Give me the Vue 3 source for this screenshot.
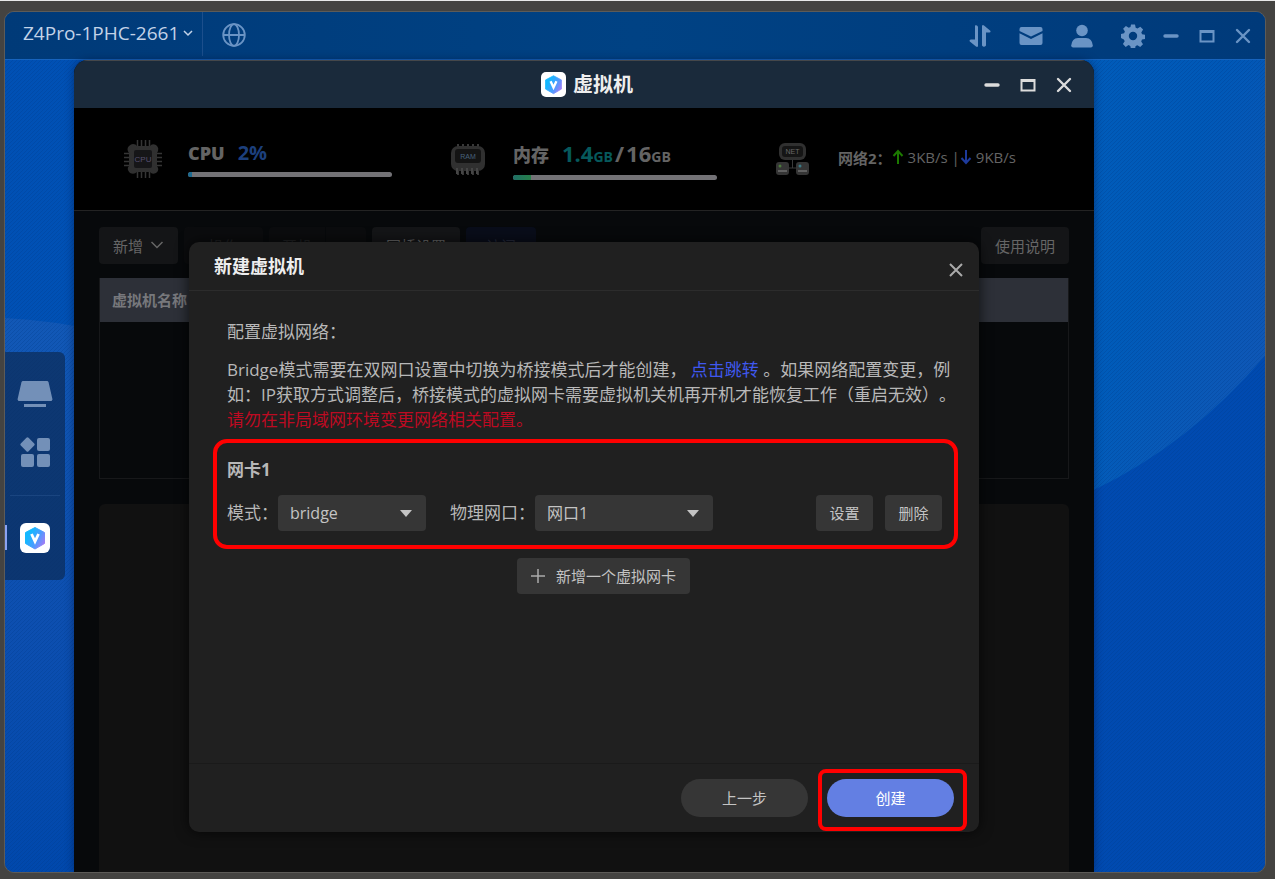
<template>
  <div class="page" lang="zh-CN">
    <div class="desktop">
      <svg class="wallpaper" viewBox="0 0 1260 860" preserveAspectRatio="none" aria-hidden="true">
        <defs>
          <linearGradient id="wall" x1="0" y1="0" x2="1" y2="0">
            <stop offset="0" stop-color="#0050b4" />
            <stop offset="0.85" stop-color="#005cba" />
            <stop offset="1" stop-color="#0057b6" />
          </linearGradient>
          <linearGradient id="wave" x1="0" y1="0" x2="0" y2="1">
            <stop offset="0" stop-color="#1258b6" />
            <stop offset="0.55" stop-color="#0d4fb0" />
            <stop offset="1" stop-color="#0048ac" />
          </linearGradient>
          <linearGradient id="glow" x1="0" y1="0" x2="1" y2="1">
            <stop offset="0.4" stop-color="#1459b6" stop-opacity="0" />
            <stop offset="1" stop-color="#1457b6" />
          </linearGradient>
          <pattern id="stripes" width="4" height="4" patternUnits="userSpaceOnUse">
            <path d="M-1 1l2-2M0 4l4-4M3 5l2-2" stroke="#003c8c" stroke-opacity="0.3" />
          </pattern>
        </defs>
        <rect width="1260" height="860" fill="url(#wall)" />
        <path d="M0 306Q45 308 100 320V860H0z" fill="url(#wave)" />
        <path d="M1089 40H1260V344Q1185 432 1089 478z" fill="url(#glow)" />
        <path d="M1089 478Q1185 432 1260 344V860H1089z" fill="#004ab0" />
        <rect width="1260" height="860" fill="url(#stripes)" />
      </svg>

      <header class="topbar">
        <button class="device">Z4Pro-1PHC-2661
          <svg width="10" height="10" viewBox="0 0 10 10"><path d="M1 3l4 4 4-4" /></svg>
        </button>
        <button class="globe" aria-label="网络">
          <svg width="24" height="24" viewBox="0 0 24 24" fill="none" stroke="#6a94c5" stroke-width="1.800">
            <circle cx="12" cy="12" r="10.800" />
            <ellipse cx="12" cy="12" rx="5" ry="10.800" />
            <path d="M1.200 12h21.600" />
          </svg>
        </button>
        <nav class="tray">
          <button aria-label="传输">
            <svg width="24" height="24" viewBox="0 0 24 24">
              <path d="M7 1.500a2 2 0 0 1 3 1.600V22q-.500 1.500-2 .500L1.800 17.500q-.800-1.700 1-2H7zM14 21.500V2q.500-1.500 2-.500l6.300 5.200q.800 1.600-1 1.900H18v12.800q-2 2.500-4 .100z" />
            </svg>
          </button>
          <button aria-label="消息">
            <svg width="24" height="24" viewBox="0 0 24 24">
              <path d="M2.500 3h19Q23.500 3 23.500 5v2L12 12.500.500 7V5q0-2 2-2zM.500 9.300L12 15l11.500-5.700V19q0 2-2 2h-19q-2 0-2-2z" />
            </svg>
          </button>
          <button aria-label="用户">
            <svg width="24" height="24" viewBox="0 0 24 24">
              <circle cx="12" cy="6.500" r="5.800" />
              <path d="M1.200 21.500Q2 14 8 14h8q6 0 6.800 7.500.100 2-2 2H3.200q-2.100 0-2-2z" />
            </svg>
          </button>
          <button aria-label="设置">
            <svg width="24" height="24" viewBox="0 0 24 24">
              <path fill-rule="evenodd" d="M10 .600h4l.700 3.200 1.800.800 2.800-1.800 2.800 2.800-1.800 2.800.800 1.800 3.100.700v4l-3.200.700-.800 1.800 1.800 2.800-2.800 2.800-2.800-1.800-1.800.800-.600 3.100h-4l-.700-3.200-1.800-.800-2.800 1.800-2.800-2.800 1.800-2.800-.800-1.800L-.100 14v-4l3.200-.700.800-1.800-1.800-2.800 2.800-2.800 2.800 1.800 1.800-.800zM12 7.800a4.200 4.200 0 1 0 0 8.400 4.200 4.200 0 0 0 0-8.400z" />
            </svg>
          </button>
        </nav>
        <WindowControls class="controls dim" />
      </header>

      <div class="workarea">
        <aside class="dock">
          <span class="dock-peek"></span>
          <button aria-label="桌面">
            <svg width="36" height="28" viewBox="0 0 36 28" fill="#7390b8">
              <path d="M5.500 1h25l1 1L35.500 19.500l-1 1.500h-33l-1-1.500L4.500 2zM7 24h22v3H7z" />
            </svg>
          </button>
          <button aria-label="应用">
            <svg width="32" height="32" viewBox="0 0 32 32" fill="#7390b8">
              <rect x="3" y="3" width="11" height="11" rx="1.500" transform="rotate(45 8.500 8.500)" />
              <rect x="18" y="2" width="13" height="13" rx="2" />
              <rect x="2" y="18" width="13" height="13" rx="2" />
              <rect x="18" y="18" width="13" height="13" rx="2" />
            </svg>
          </button>
          <hr />
          <button aria-label="虚拟机"><VmLogo :size="30" /></button>
        </aside>

        <main class="window">
          <header class="window-head">
            <VmLogo :size="25" />
            <h1>虚拟机</h1>
            <WindowControls class="controls bright" />
          </header>

          <section class="metrics">
            <div class="metric">
              <svg class="metric-icon" width="38" height="38" viewBox="0 0 38 38">
                <path d="M13.500 0v38M17.500 0v38M21.500 0v38M25.500 0v38M0 13.500h38M0 17.500h38M0 21.500h38M0 25.500h38" stroke="#353535" stroke-width="1.500" />
                <path d="M9 4q3 0 4 2h13q2-3 6-1 4 3 1 8v13q3 4-1 7-4 2-6-1H13q-3 3-7 1-4-4-1-7V13q-3-4 0-7 2-2 4-2z" fill="#303030" />
                <rect x="10" y="10" width="18" height="18" rx="2" fill="#161618" />
                <text x="19" y="22" text-anchor="middle" font-size="8" fill="#565070">CPU</text>
              </svg>
              <div>
                <p class="reading"><b>CPU</b><span class="cpu">2%</span></p>
                <div class="bar"><i class="cpu-fill" :style="{ width: cpu + '%' }"></i></div>
              </div>
            </div>
            <div class="metric">
              <svg class="metric-icon" width="38" height="38" viewBox="0 0 38 38">
                <path d="M9 4v31M14 4v31M19 4v31M24 4v31M29 4v31" stroke="#383838" stroke-width="2" />
                <rect x="2" y="6" width="34" height="25" rx="7" fill="#303030" />
                <path d="M8 28v6M13 28v6M18 28v6M23 28v6M28 28v6" stroke="#454545" stroke-width="2" />
                <rect x="6" y="9" width="26" height="14" rx="3" fill="#141414" />
                <text x="19" y="19" text-anchor="middle" font-size="7" fill="#48627a">RAM</text>
              </svg>
              <div>
                <p class="reading memory"><b>内存</b><span class="ram">1.4<small>GB</small></span><span class="slash">/</span><span>16<small>GB</small></span></p>
                <div class="bar"><i class="ram-fill" :style="{ width: ram + '%' }"></i></div>
              </div>
            </div>
            <div class="metric">
              <svg class="metric-icon" width="38" height="38" viewBox="0 0 38 38">
                <path d="M18.500 18v10M12 28h14" stroke="#3a3a3a" />
                <rect x="5" y="3" width="27" height="17" rx="6" fill="#303030" />
                <rect x="8" y="6" width="21" height="11" rx="3" fill="#151515" />
                <rect x="2" y="22" width="13" height="13" rx="3" fill="#353535" />
                <rect x="22" y="22" width="13" height="13" rx="3" fill="#353535" />
                <path d="M4 31h9M24 31h9" stroke="#606060" stroke-width="2" />
                <circle cx="6" cy="26" r="1.500" fill="#4c7a3c" />
                <circle cx="26" cy="26" r="1.500" fill="#397a86" />
                <text x="18.500" y="14" text-anchor="middle" font-size="7" fill="#686868">NET</text>
              </svg>
              <p class="network"><b>网络2：</b>
                <svg width="12" height="16" viewBox="0 0 12 16" stroke="#1c7a00"><path d="M6 15V2M1.500 7L6 2l4.500 5" /></svg>
                <span>3KB/s |</span>
                <svg width="12" height="16" viewBox="0 0 12 16" stroke="#1d3a9c"><path d="M6 1v13M1.500 9L6 14l4.500-5" /></svg>
                <span>9KB/s</span>
              </p>
            </div>
          </section>

          <section class="content">
            <div class="toolbar">
              <button class="tool">新增
                <svg width="14" height="10" viewBox="0 0 14 10"><path d="M1.500 2L7 7.500 12.500 2" /></svg>
              </button>
              <button class="tool off" disabled>操作</button>
              <span class="split">
                <button class="tool off" disabled>开机</button>
                <button class="tool off more" disabled aria-label="更多"></button>
              </span>
              <button class="tool bridge">网桥设置</button>
              <button class="tool visit" disabled>访问</button>
              <button class="tool help">使用说明</button>
            </div>
            <div class="table-box">
              <table>
                <thead><tr><th>虚拟机名称</th></tr></thead>
              </table>
            </div>
            <div class="detail"></div>
          </section>

          <div class="mask">
            <form class="modal" role="dialog" aria-labelledby="modal-title" @submit.prevent>
              <header class="modal-head">
                <h2 id="modal-title">新建虚拟机</h2>
                <button type="button" class="close" aria-label="关闭">
                  <svg width="14" height="14" viewBox="0 0 14 14"><path d="M1 1l12 12M13 1L1 13" /></svg>
                </button>
              </header>
              <div class="modal-body">
                <h3>配置虚拟网络：</h3>
                <p class="hint">Bridge模式需要在双网口设置中切换为桥接模式后才能创建， <a href="#">点击跳转</a> 。如果网络配置变更，例如：IP获取方式调整后，桥接模式的虚拟网卡需要虚拟机关机再开机才能恢复工作（重启无效）。</p>
                <p class="warning">请勿在非局域网环境变更网络相关配置。</p>
                <fieldset class="nic">
                  <h4>网卡1</h4>
                  <div class="nic-row">
                    <label for="mode">模式：</label>
                    <span class="select mode">
                      <select id="mode" v-model="mode"><option>bridge</option></select>
                      <svg width="12" height="7" viewBox="0 0 12 7"><path d="M0 0h12L6 7z" /></svg>
                    </span>
                    <label for="port">物理网口：</label>
                    <span class="select port">
                      <select id="port" v-model="port"><option>网口1</option></select>
                      <svg width="12" height="7" viewBox="0 0 12 7"><path d="M0 0h12L6 7z" /></svg>
                    </span>
                    <div class="nic-actions">
                      <button type="button" class="small">设置</button>
                      <button type="button" class="small">删除</button>
                    </div>
                  </div>
                </fieldset>
                <button type="button" class="small add">
                  <svg width="14" height="14" viewBox="0 0 14 14"><path d="M7 0v14M0 7h14" /></svg>新增一个虚拟网卡
                </button>
              </div>
              <footer class="modal-foot">
                <button type="button" class="pill">上一步</button>
                <div class="highlight"><button type="submit" class="pill primary">创建</button></div>
              </footer>
            </form>
          </div>
        </main>
      </div>
    </div>
  </div>
</template>

<script setup>
import { h, ref } from 'vue'

const cpu = ref(2)
const ram = ref(9)
const mode = ref('bridge')
const port = ref('网口1')

const icon = (size, children) => h('svg', { width: size, height: size, viewBox: '0 0 16 16', fill: 'none', stroke: 'currentColor', 'stroke-linecap': 'round' }, children)

const WindowControls = () => h('div', [
  h('button', { 'aria-label': '最小化' }, [icon(16, [h('path', { d: 'M2 8h12', 'stroke-width': 3.4 })])]),
  h('button', { 'aria-label': '最大化' }, [icon(16, [h('path', { d: 'M1.500 3h13v10.500h-13z', 'stroke-width': 2 }), h('path', { d: 'M2 4h12', 'stroke-width': 2 })])]),
  h('button', { 'aria-label': '关闭' }, [icon(16, [h('path', { d: 'M2 2l12 12M14 2L2 14', 'stroke-width': 2.4 })])])
])

const VmLogo = (props) => h('svg', { width: props.size, height: props.size, viewBox: '0 0 30 30' }, [
  h('defs', [
    h('linearGradient', { id: 'vm' + props.size, x1: 0, y1: 0.2, x2: 1, y2: 0.8 }, [
      h('stop', { offset: 0.2, 'stop-color': '#14b8ff' }),
      h('stop', { offset: 0.6, 'stop-color': '#4b9cff' }),
      h('stop', { offset: 1, 'stop-color': '#a77bf5' })
    ])
  ]),
  h('rect', { width: 30, height: 30, rx: 6, fill: '#fff' }),
  h('path', { d: 'M15 4.500l9.500 5v11L15 26l-9.500-5.500v-11z', fill: `url(#vm${props.size})`, stroke: `url(#vm${props.size})`, 'stroke-linejoin': 'round' }),
  h('path', { d: 'M11.500 11L15 18.500l3.500-7.500', fill: 'none', stroke: '#fff', 'stroke-width': 2.8 })
])
VmLogo.props = ['size']
</script>

<style>
body {
  background: #444341;
}
</style>

<style scoped>
* {
  box-sizing: border-box;
  margin: 0;
  padding: 0;
}

.page {
  height: 100vh;
  min-height: 860px;
  padding: 10px 9px 6px 4px;
  border-top: 1px solid #e8e8e8;
  background: #444341;
  font-family: "Open Sans", "Noto Sans CJK SC", sans-serif;
  font-size: 17px;
  text-spacing-trim: space-all;
}

button {
  border: 0;
  background: none;
  color: inherit;
  font: inherit;
  cursor: pointer;
}

svg {
  flex: none;
}

.desktop {
  position: relative;
  display: flex;
  flex-direction: column;
  height: 100%;
  overflow: hidden;
  border: 1px solid #5d5b58;
  border-radius: 10px;
}

.wallpaper {
  position: absolute;
  inset: 0;
  width: 100%;
  height: 100%;
}

/* top bar */
.topbar {
  position: relative;
  display: flex;
  align-items: center;
  flex: none;
  height: 48px;
  border-bottom: 1px solid #1763bd;
  background: linear-gradient(90deg, #003a78, #004284 50%, #003a7a);
}

.device {
  display: flex;
  align-items: center;
  gap: 4px;
  height: 44px;
  margin-bottom: 3px;
  padding: 0 9px 2px 18px;
  border-right: 1px solid #1c4f8c;
  color: #c3d3e8;
  font-size: 19px;
}

.device svg {
  fill: none;
  stroke: #c3d3e8;
  stroke-width: 1.5;
}

.globe {
  display: flex;
  margin-left: 19px;
  padding-bottom: 2px;
}

.tray {
  display: flex;
  gap: 27px;
  margin-left: auto;
}

.tray button {
  display: flex;
}

.tray svg {
  fill: #6a94c5;
}

.controls {
  display: flex;
  gap: 20px;
}

.controls :deep(button) {
  display: flex;
  border: 0;
  padding: 0;
  background: none;
  color: inherit;
}

.dim {
  margin: 1px 14px 0 18px;
  color: #6a94c5;
}

/* dock and window */
.workarea {
  position: relative;
  display: flex;
  align-items: flex-start;
  gap: 9px;
  flex: 1;
  min-height: 0;
}

.dock {
  position: relative;
  display: flex;
  flex: none;
  flex-direction: column;
  align-items: center;
  width: 60px;
  margin-top: 292px;
  padding: 28px 0 27px;
  border-radius: 0 6px 6px 0;
  background: rgba(12, 45, 92, 0.75);
}

.dock button {
  display: flex;
}

.dock button + button {
  margin-top: 28px;
}

.dock hr {
  width: 50px;
  margin: 27px 0;
  border: 0;
  border-top: 1px solid #1a4580;
}

.dock-peek {
  position: absolute;
  bottom: 30px;
  left: 0;
  width: 2px;
  height: 25px;
  background: #8ba2f2;
}

.window {
  position: relative;
  display: flex;
  flex: 0 1 1020px;
  flex-direction: column;
  height: 100%;
  overflow: hidden;
  border-radius: 14px 14px 0 0;
  background: #07090b;
  box-shadow: 0 0 8px rgba(0, 20, 60, 0.5);
}

.window-head {
  position: relative;
  display: flex;
  align-items: center;
  justify-content: center;
  gap: 7px;
  flex: none;
  height: 48px;
  padding-left: 6px;
  border-top: 1px solid #45474a;
  background: #1a2a3b;
  color: #eee;
}

.window-head h1 {
  font-size: 20px;
  line-height: 28px;
}

.bright {
  position: absolute;
  right: 22px;
  color: #dcdcdc;
}

/* metrics */
.metrics {
  display: grid;
  grid-template-columns: 325px 325px 1fr;
  flex: none;
  height: 103px;
  padding: 32px 0 0 50px;
  border-bottom: 1px solid #232323;
  background: #000;
  color: #646464;
}

.metric {
  display: flex;
  align-items: flex-start;
}

.metric-icon {
  margin-right: 26px;
  font-family: "Liberation Sans", sans-serif;
}

.reading {
  display: flex;
  align-items: baseline;
  height: 32px;
  font-size: 22px;
  font-weight: 700;
  line-height: 26px;
}

.reading b {
  margin-right: 13px;
  font-size: 18px;
}

.reading small {
  font-size: 14px;
}

.memory {
  height: 35px;
}

.cpu {
  color: #1c3f7c;
  font-size: 20px;
}

.ram {
  color: #06595c;
}

.slash {
  margin: 0 2px;
}

.bar {
  width: 204px;
  height: 5px;
  overflow: hidden;
  border-radius: 3px;
  background: #737276;
}

.bar i {
  display: block;
  height: 100%;
}

.cpu-fill {
  background: #1d6a90;
}

.ram-fill {
  background: linear-gradient(90deg, #1f6e66, #278049);
}

.network {
  display: flex;
  align-items: center;
  height: 34px;
  font-size: 15px;
}

.network svg {
  margin-right: 4px;
  fill: none;
  stroke-width: 2;
}

/* content */
.content {
  display: flex;
  flex: 1;
  flex-direction: column;
  min-height: 0;
  padding: 16px 25px 0;
}

.toolbar {
  display: flex;
  gap: 6px;
}

.tool {
  display: flex;
  align-items: center;
  justify-content: center;
  gap: 7px;
  min-width: 79px;
  height: 37px;
  padding: 0 12px 1px;
  border-radius: 4px;
  background: #141517;
  color: #666;
  font-size: 15px;
}

.tool svg {
  fill: none;
  stroke: #666;
  stroke-width: 1.5;
}

.off {
  background: #0b0c0e;
  color: #202123;
}

.split {
  display: flex;
  gap: 1px;
}

.split .tool {
  min-width: 56px;
  border-radius: 4px 0 0 4px;
}

.split .more {
  min-width: 40px;
  border-radius: 0 4px 4px 0;
}

.bridge {
  min-width: 88px;
}

.visit {
  min-width: 70px;
  background: #090d1a;
  color: #252a3a;
}

.help {
  min-width: 88px;
  margin-left: auto;
}

.table-box {
  flex: none;
  height: 201px;
  margin-top: 14px;
  border: 1px solid #17181a;
  border-top: 0;
}

table {
  width: 100%;
  border-collapse: collapse;
}

th {
  height: 44px;
  padding: 0 12px 2px;
  background: #2d3038;
  color: #77787c;
  font-size: 15px;
  text-align: left;
}

.detail {
  flex: 1;
  margin-top: 25px;
  border-radius: 6px 6px 0 0;
  background: #111;
}

/* dialog */
.mask {
  position: absolute;
  inset: 0;
  display: flex;
  align-items: flex-start;
  justify-content: center;
  padding-top: 182px;
}

.modal {
  display: flex;
  flex: 0 1 790px;
  flex-direction: column;
  min-height: 590px;
  border-radius: 10px;
  background: #202020;
  box-shadow: 0 0 14px rgba(0, 0, 0, 0.7);
  color: #b8b8b8;
}

.modal-head {
  display: flex;
  align-items: center;
  justify-content: space-between;
  height: 49px;
  padding: 0 16px 0 25px;
  border-bottom: 1px solid #2c2c2c;
}

.modal-head h2 {
  color: #eee;
  font-size: 18px;
  line-height: 24px;
}

.close {
  display: flex;
  padding-top: 8px;
}

.close svg,
.add svg {
  fill: none;
  stroke: #aaa;
  stroke-width: 1.5;
}

.close svg {
  stroke-width: 2;
}

.modal-body {
  display: flex;
  flex: 1;
  flex-direction: column;
  padding: 28px 21px 0 24px;
}

.modal-body h3,
.hint,
.warning {
  padding-left: 14px;
  font-size: 17px;
  font-weight: 400;
  line-height: 25px;
}

.hint {
  margin-top: 13px;
}

.hint a {
  color: #3f58ee;
  text-decoration: none;
}

.warning {
  color: #bd0a22;
}

.nic {
  margin-top: 7px;
  padding: 14px 12px 14px 10px;
  border: 4px solid #ff0000;
  border-radius: 14px;
}

.nic h4 {
  font-size: 17px;
  line-height: 26px;
}

.nic-row {
  display: flex;
  align-items: center;
  margin-top: 12px;
}

.nic-row label {
  line-height: 24px;
  white-space: nowrap;
}

.select {
  position: relative;
  display: flex;
}

.mode {
  width: 148px;
  margin-right: 24px;
}

.port {
  width: 178px;
}

.select select {
  width: 100%;
  height: 36px;
  padding: 0 30px 1px 12px;
  border: 0;
  border-radius: 4px;
  appearance: none;
  background: #363636;
  color: #c4c4c4;
  font: inherit;
  font-size: 16px;
}

.select svg {
  position: absolute;
  top: 15px;
  right: 14px;
  fill: #c4c4c4;
  pointer-events: none;
}

.nic-actions {
  display: flex;
  gap: 12px;
  margin-left: auto;
}

.small {
  display: flex;
  align-items: center;
  justify-content: center;
  min-width: 57px;
  height: 36px;
  padding: 0 13px 2px;
  border-radius: 4px;
  background: #363636;
  color: #c4c4c4;
  font-size: 15px;
}

.add {
  align-self: center;
  gap: 11px;
  margin-top: 9px;
  margin-left: 36px;
  padding: 0 14px 1px;
}

.modal-foot {
  display: flex;
  align-items: flex-start;
  justify-content: flex-end;
  gap: 10px;
  height: 69px;
  padding: 5px 12px 0;
  border-top: 1px solid #1a1a1a;
}

.pill {
  width: 127px;
  height: 38px;
  margin-top: 10px;
  padding-bottom: 2px;
  border-radius: 19px;
  background: #363636;
  color: #c4c4c4;
  font-size: 15px;
}

.highlight {
  display: flex;
  padding: 6px 9px 10px 5px;
  border: 4px solid #ff0000;
  border-radius: 8px;
}

.primary {
  margin: 0;
  background: #637fe3;
  color: #fff;
}
</style>
